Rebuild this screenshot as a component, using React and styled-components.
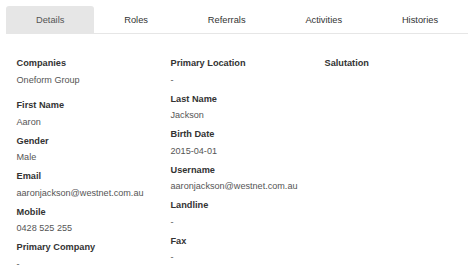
import React from 'react'
import styled, { createGlobalStyle } from 'styled-components'

const GlobalStyle = createGlobalStyle`
  html, body {
    margin: 0;
    padding: 0;
    background: #fff;
  }
  body {
    font-family: "Liberation Sans", Arial, Helvetica, sans-serif;
    -webkit-font-smoothing: antialiased;
  }
`

const Page = styled.div`
  padding: 6px 6px 0 6px;
  width: 462px;
`

const TabBar = styled.ul`
  display: flex;
  margin: 0;
  padding: 0;
  list-style: none;
  border-bottom: 1px solid #e6e6e6;
`

const Tab = styled.li`
  flex: 1 1 auto;
  height: 27px;
  line-height: 28px;
  text-align: center;
  font-size: 9.3px;
  color: ${p => (p.$active ? '#555' : '#333')};
  background: ${p => (p.$active ? '#e6e6e6' : 'transparent')};
  border-radius: 3px 3px 0 0;
  cursor: pointer;
`

const Grid = styled.div`
  display: grid;
  grid-template-columns: repeat(3, 1fr);
  padding-top: 23px;
`

const Column = styled.div`
  padding-left: 10.5px;
`

const Field = styled.div`
  padding-bottom: ${p => (p.$spaced ? '6.5px' : '0')};
`

const Label = styled.div`
  font-size: 9.2px;
  line-height: 13px;
  font-weight: bold;
  color: #333;
  margin-bottom: 3.5px;
`

const Value = styled.div`
  font-size: 9.1px;
  line-height: 13px;
  color: #555;
  margin-bottom: 6px;
`

const tabs = ['Details', 'Roles', 'Referrals', 'Activities', 'Histories']

const columns = [
  [
    { label: 'Companies', value: 'Oneform Group', spaced: true },
    { label: 'First Name', value: 'Aaron' },
    { label: 'Gender', value: 'Male' },
    { label: 'Email', value: 'aaronjackson@westnet.com.au' },
    { label: 'Mobile', value: '0428 525 255' },
    { label: 'Primary Company', value: '-' },
  ],
  [
    { label: 'Primary Location', value: '-' },
    { label: 'Last Name', value: 'Jackson' },
    { label: 'Birth Date', value: '2015-04-01' },
    { label: 'Username', value: 'aaronjackson@westnet.com.au' },
    { label: 'Landline', value: '-' },
    { label: 'Fax', value: '-' },
  ],
  [
    { label: 'Salutation', value: '' },
  ],
]

export default function App () {
  return (
    <Page>
      <GlobalStyle />
      <TabBar>
        {tabs.map(t => (
          <Tab key={t} $active={t === 'Details'}>{t}</Tab>
        ))}
      </TabBar>
      <Grid>
        {columns.map((col, i) => (
          <Column key={i}>
            {col.map(f => (
              <Field key={f.label} $spaced={f.spaced}>
                <Label>{f.label}</Label>
                {f.value ? <Value>{f.value}</Value> : null}
              </Field>
            ))}
          </Column>
        ))}
      </Grid>
    </Page>
  )
}
